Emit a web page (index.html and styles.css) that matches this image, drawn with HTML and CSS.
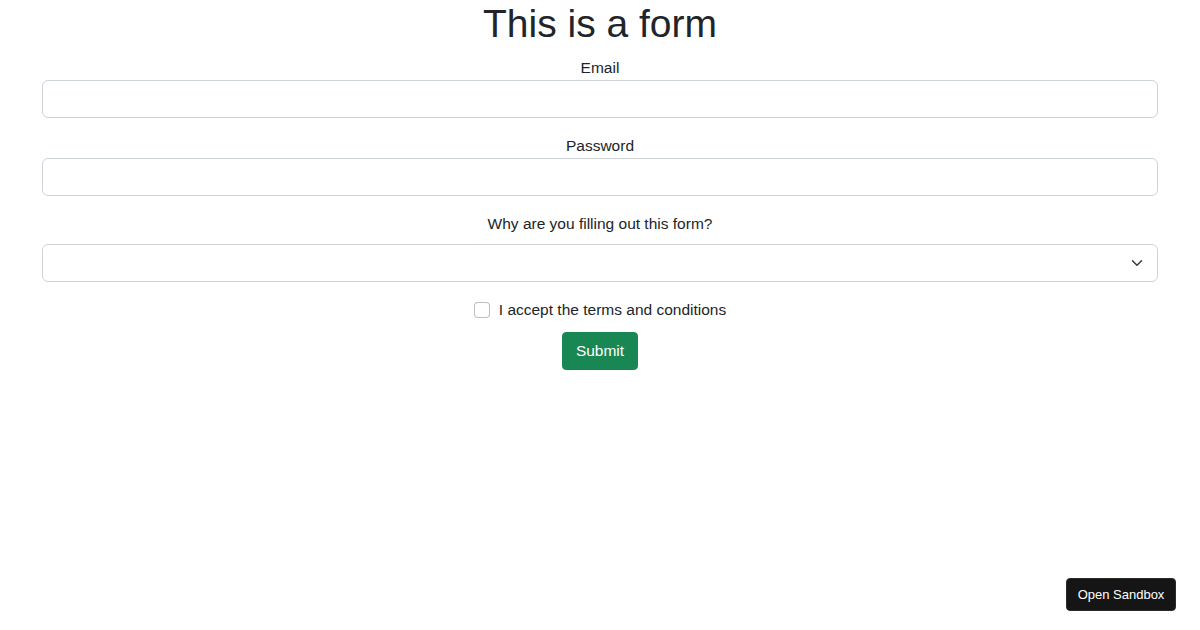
FILE: index.html
```html
<!DOCTYPE html>
<html>
<head>
<meta charset="utf-8">
<link rel="stylesheet" href="styles.css">
</head>
<body>
<div class="container">
  <h1 class="title">This is a form</h1>
  <form class="form">
    <div class="field">
      <label class="label">Email</label>
      <input class="control" type="email">
    </div>
    <div class="field">
      <label class="label">Password</label>
      <input class="control" type="password">
    </div>
    <div class="field">
      <label class="label label-spaced">Why are you filling out this form?</label>
      <div class="select">
        <svg class="chev" width="16" height="12" viewBox="0 0 16 16"><path d="M2 5l6 6 6-6" fill="none" stroke="#343a40" stroke-width="2" stroke-linecap="round" stroke-linejoin="round"/></svg>
      </div>
    </div>
    <div class="check">
      <span class="box"></span>
      <span class="check-label">I accept the terms and conditions</span>
    </div>
    <div class="actions">
      <button class="submit" type="button">Submit</button>
    </div>
  </form>
</div>
<button class="sandbox" type="button">Open Sandbox</button>
</body>
</html>
```
FILE: styles.css
```css
* { box-sizing: border-box; }
html, body { margin: 0; padding: 0; }
body {
  font-family: "Liberation Sans", Arial, sans-serif;
  font-size: 15.5px;
  line-height: 24px;
  color: #212529;
  background: #fff;
  width: 1200px;
  height: 630px;
  overflow: hidden;
}
.container {
  width: 1140px;
  margin: 0 auto;
  padding: 0 12px;
  text-align: center;
}
.title {
  margin: 0 0 8px;
  font-size: 39px;
  font-weight: 400;
  line-height: 48px;
}
.form { display: flex; flex-direction: column; }
.field { display: flex; flex-direction: column; margin-bottom: 16px; }
.label { display: block; height: 24px; }
.label-spaced { margin-bottom: 8px; }
.control, .select {
  display: block;
  width: 100%;
  height: 38px;
  border: 1px solid #ced4da;
  border-radius: 6px;
  background: #fff;
  font: inherit;
  padding: 6px 12px;
}
.select { position: relative; }
.chev { position: absolute; right: 12px; top: 12px; }
.check {
  display: flex;
  justify-content: center;
  align-items: center;
  height: 24px;
  gap: 9px;
  margin-bottom: 10px;
}
.box {
  width: 16px;
  height: 16px;
  border: 1px solid rgba(0,0,0,.25);
  border-radius: 4px;
  background: #fff;
}
.actions { display: flex; justify-content: center; }
.submit {
  width: 76px;
  height: 38px;
  padding: 0;
  background: #198754;
  color: #fff;
  border: 1px solid #198754;
  border-radius: 4px;
  font: inherit;
}
.sandbox {
  position: fixed;
  right: 24px;
  bottom: 19px;
  width: 110px;
  height: 33px;
  background: #151515;
  color: #fff;
  border: 1px solid #2a2a2a;
  border-radius: 4px;
  font-family: "Liberation Sans", Arial, sans-serif;
  font-size: 13px;
  padding: 0;
}
```
